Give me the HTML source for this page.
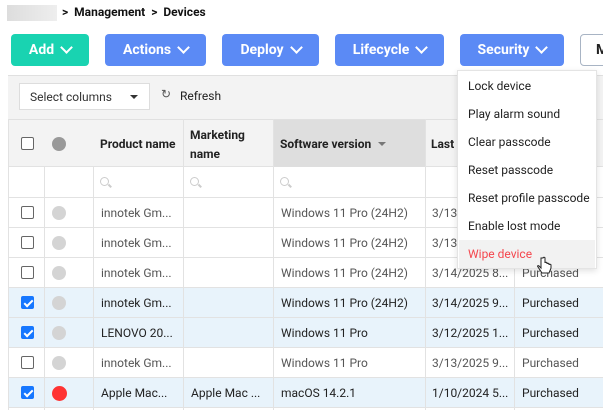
<!DOCTYPE html>
<html style="overflow:hidden;width:603px;height:410px"><head><meta charset="utf-8"><style>
*{box-sizing:border-box;margin:0;padding:0}
body{width:603px;height:410px;overflow:hidden;background:#fff;font-family:"Roboto","Liberation Sans",sans-serif;font-size:12px;color:#222;position:relative}
.a{position:absolute}
.btn{position:absolute;top:34px;height:32px;border-radius:4px;background:#5b8af5;color:#fff;font-weight:bold;font-size:14px;display:flex;align-items:center;justify-content:center;gap:8px}
.chev{width:9px;height:9px;border-right:2.5px solid #fff;border-bottom:2.5px solid #fff;transform:rotate(45deg);margin-top:-5px}
.vl{position:absolute;top:119px;bottom:0;width:1px;background:#e2e2e2}
.row{position:absolute;left:8px;width:600px;height:30px;border-bottom:1px solid #e2e2e2}
.cell{position:absolute;top:0;height:30px;line-height:30px;font-size:12px;white-space:nowrap}
.cb{position:absolute;left:13px;top:8px;width:13px;height:13px;border:1px solid #666;border-radius:2px;background:#fff}
.cb.on{background:#1677ff;border-color:#1677ff}
.cb.on:after{content:"";position:absolute;left:3.5px;top:0.5px;width:3px;height:7px;border-right:2px solid #fff;border-bottom:2px solid #fff;transform:rotate(45deg)}
.dot{position:absolute;left:44px;top:8px;width:14px;height:14px;border-radius:50%;background:#d4d4d4}
.mi{position:absolute;left:468px;font-size:12px;color:#222}
.srch{position:absolute;top:177px;width:9px;height:9px;border:1.5px solid #ccc;border-radius:50%}
.srch:after{content:"";position:absolute;left:7px;top:7px;width:4px;height:1.5px;background:#ccc;transform:rotate(45deg)}
</style></head><body>
<div class="a" style="left:7px;top:5px;width:50px;height:16px;background:linear-gradient(90deg,#ddd,#eee)"></div>
<div class="a" style="left:62px;top:5px;font-size:12px;font-weight:bold;color:#111">&gt;&nbsp; Management &nbsp;&gt;&nbsp; Devices</div>

<div class="btn" style="left:11px;width:78px;background:#19d3b1">Add <span class="chev"></span></div>
<div class="btn" style="left:105px;width:101px">Actions <span class="chev"></span></div>
<div class="btn" style="left:222px;width:97px">Deploy <span class="chev"></span></div>
<div class="btn" style="left:335px;width:109px">Lifecycle <span class="chev"></span></div>
<div class="btn" style="left:460px;width:104px">Security <span class="chev"></span></div>
<div class="a" style="left:580px;top:34px;width:40px;height:32px;border:1px solid #a8b4c4;border-radius:4px;font-weight:bold;font-size:14px;line-height:30px;padding-left:15px">M</div>

<div class="a" style="left:8px;top:75px;width:600px;height:44px;background:#f3f3f3;border-top:1px solid #e0e0e0"></div>
<div class="a" style="left:19px;top:83px;width:131px;height:27px;background:#fff;border:1px solid #ddd;padding:6px 0 0 10px;font-size:12px;color:#333">Select columns</div>
<div class="a" style="left:130px;top:95px;border:4px solid transparent;border-top:4px solid #333"></div>
<div class="a" style="left:161px;top:87px;font-size:12px;color:#555">&#x21bb;</div>
<div class="a" style="left:180px;top:89px;font-size:12px;color:#222">Refresh</div>

<div class="a" style="left:8px;top:119px;width:600px;height:48px;background:#f3f3f3;border-top:1px solid #e0e0e0;border-bottom:1px solid #e2e2e2"></div>
<div class="a" style="left:273px;top:120px;width:152px;height:47px;background:#dedede"></div>
<div class="a" style="left:21px;top:137px;width:13px;height:13px;border:1px solid #666;border-radius:2px;background:#fff"></div>
<div class="a" style="left:52px;top:137px;width:14px;height:14px;border-radius:50%;background:#999"></div>
<div class="a" style="left:100px;top:137px;font-weight:bold;color:#222">Product name</div>
<div class="a" style="left:190px;top:126px;font-weight:bold;color:#222;line-height:19px">Marketing<br>name</div>
<div class="a" style="left:280px;top:137px;font-weight:bold;color:#222">Software version</div>
<div class="a" style="left:378px;top:142px;border:4px solid transparent;border-top:4px solid #777"></div>
<div class="a" style="left:431px;top:137px;font-weight:bold;color:#222">Last</div>

<div class="a" style="left:8px;top:167px;width:600px;height:31px;border-bottom:1px solid #e2e2e2"></div>
<div class="srch" style="left:100px"></div><div class="srch" style="left:190px"></div><div class="srch" style="left:280px"></div>

<div class="row" style="top:198px"><div class="cb"></div><div class="dot"></div><div class="cell" style="left:93px;color:#555">innotek Gm...</div><div class="cell" style="left:273px;color:#555">Windows 11 Pro (24H2)</div><div class="cell" style="left:424px;color:#555">3/13</div></div>
<div class="row" style="top:228px"><div class="cb"></div><div class="dot"></div><div class="cell" style="left:93px;color:#555">innotek Gm...</div><div class="cell" style="left:273px;color:#555">Windows 11 Pro (24H2)</div><div class="cell" style="left:424px;color:#555">3/13</div></div>
<div class="row" style="top:258px"><div class="cb"></div><div class="dot"></div><div class="cell" style="left:93px;color:#555">innotek Gm...</div><div class="cell" style="left:273px;color:#555">Windows 11 Pro (24H2)</div><div class="cell" style="left:424px;color:#555">3/14/2025 8...</div><div class="cell" style="left:514px;color:#555">Purchased</div></div>
<div class="row" style="top:288px;background:#e8f3fb"><div class="cb on"></div><div class="dot"></div><div class="cell" style="left:93px">innotek Gm...</div><div class="cell" style="left:273px">Windows 11 Pro (24H2)</div><div class="cell" style="left:424px">3/14/2025 9...</div><div class="cell" style="left:514px">Purchased</div></div>
<div class="row" style="top:318px;background:#e8f3fb"><div class="cb on"></div><div class="dot"></div><div class="cell" style="left:93px">LENOVO 20...</div><div class="cell" style="left:273px">Windows 11 Pro</div><div class="cell" style="left:424px">3/12/2025 1...</div><div class="cell" style="left:514px">Purchased</div></div>
<div class="row" style="top:348px"><div class="cb"></div><div class="dot"></div><div class="cell" style="left:93px;color:#555">innotek Gm...</div><div class="cell" style="left:273px;color:#555">Windows 11 Pro</div><div class="cell" style="left:424px;color:#555">3/13/2025 9...</div><div class="cell" style="left:514px;color:#555">Purchased</div></div>
<div class="row" style="top:378px;background:#e8f3fb"><div class="cb on"></div><div class="dot" style="background:#f33;left:44px;width:15px;height:15px"></div><div class="cell" style="left:93px">Apple Mac...</div><div class="cell" style="left:183px">Apple Mac ...</div><div class="cell" style="left:273px">macOS 14.2.1</div><div class="cell" style="left:424px">1/10/2024 5...</div><div class="cell" style="left:514px">Purchased</div></div>

<div class="vl" style="left:8px"></div><div class="vl" style="left:44px;top:167px"></div><div class="vl" style="left:93px;top:167px"></div><div class="vl" style="left:183px"></div><div class="vl" style="left:273px"></div><div class="vl" style="left:425px"></div><div class="vl" style="left:514px;top:167px"></div>

<div class="a" style="left:457px;top:70px;width:140px;height:199px;background:#fff;border:1px solid #e4e4e4;box-shadow:0 2px 6px rgba(0,0,0,.12)"></div>
<div class="a" style="left:459px;top:240px;width:136px;height:28px;background:#f2f2f2"></div>
<div class="mi" style="top:79px">Lock device</div>
<div class="mi" style="top:107px">Play alarm sound</div>
<div class="mi" style="top:135px">Clear passcode</div>
<div class="mi" style="top:163px">Reset passcode</div>
<div class="mi" style="top:191px">Reset profile passcode</div>
<div class="mi" style="top:219px">Enable lost mode</div>
<div class="mi" style="top:247px;color:#f4474e">Wipe device</div>
<svg class="a" style="left:537px;top:256px" width="16" height="20" viewBox="0 0 16 20"><path d="M4 2v10l-2-2c-1-1-2 0-1 1l4 6h7l2-5V9c0-1-2-1-2 0V8c0-1-2-1-2 0V7c0-1-2-1-2 0V2c0-1-2-1-2 0z" fill="#fff" stroke="#222" stroke-width="1"/></svg>
</body></html>
